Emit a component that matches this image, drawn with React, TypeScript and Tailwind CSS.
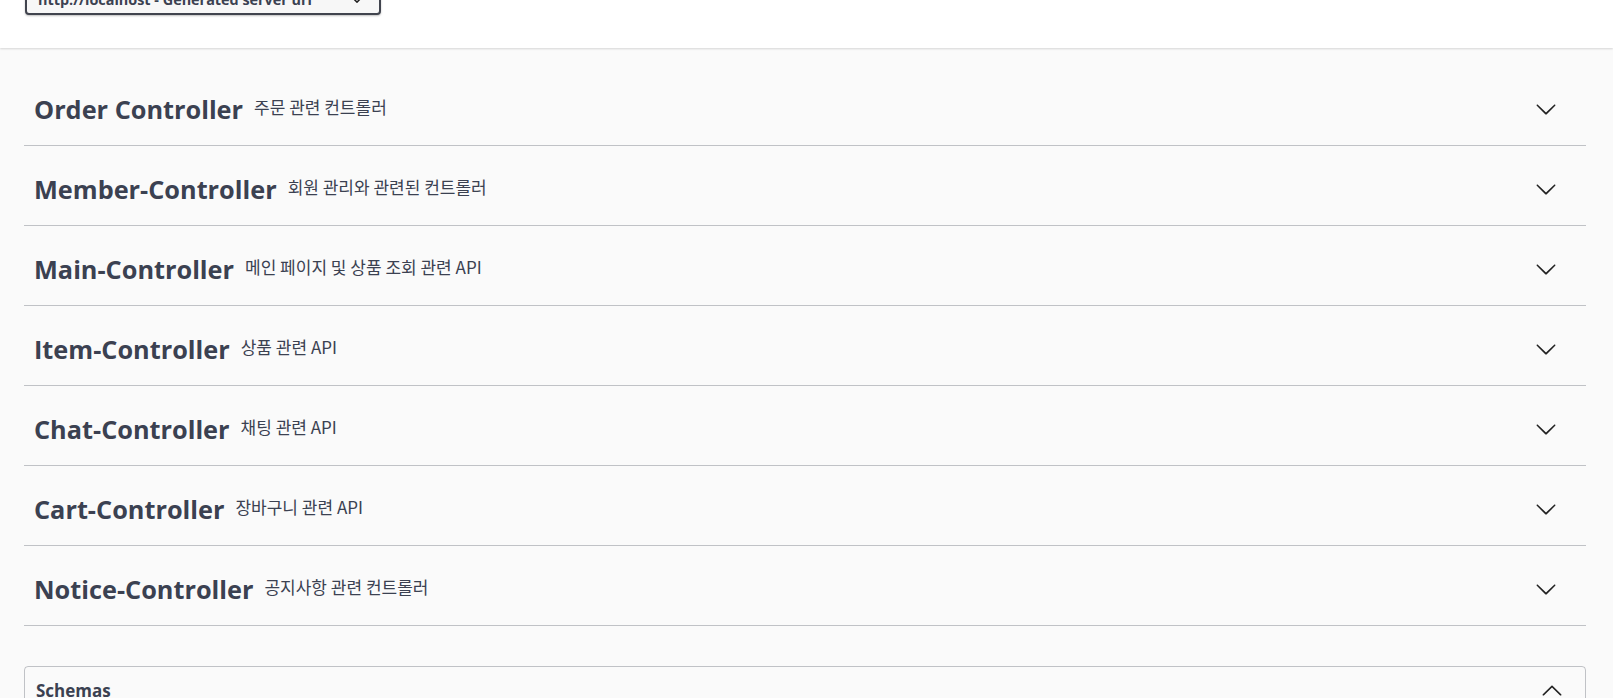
import React from "react";

const rows: { title: string; desc: string }[] = [
  { title: "Order Controller", desc: "주문 관련 컨트롤러" },
  { title: "Member-Controller", desc: "회원 관리와 관련된 컨트롤러" },
  { title: "Main-Controller", desc: "메인 페이지 및 상품 조회 관련 API" },
  { title: "Item-Controller", desc: "상품 관련 API" },
  { title: "Chat-Controller", desc: "채팅 관련 API" },
  { title: "Cart-Controller", desc: "장바구니 관련 API" },
  { title: "Notice-Controller", desc: "공지사항 관련 컨트롤러" },
];

const titleFont = { fontFamily: "'Open Sans', 'Noto Sans CJK KR', sans-serif" };
const descFont = { fontFamily: "'Noto Sans CJK KR', 'Noto Sans', sans-serif" };

function ChevronDown() {
  return (
    <svg width="22" height="22" viewBox="0 0 20 20" className="shrink-0">
      <path
        fill="#222"
        d="M17.418 6.109c.272-.268.709-.268.979 0s.271.701 0 .969l-7.908 7.83c-.27.268-.707.268-.979 0l-7.908-7.83c-.27-.268-.27-.701 0-.969.271-.268.709-.268.979 0L10 13.25l7.418-7.141z"
      />
    </svg>
  );
}

function ChevronUp() {
  return (
    <svg width="22" height="22" viewBox="0 0 20 20" className="shrink-0">
      <path
        fill="#222"
        d="M17.418 14.908c.272.268.709.268.979 0s.271-.701 0-.969l-7.908-7.83c-.27-.268-.707-.268-.979 0l-7.908 7.83c-.27.268-.27.701 0 .969.271.268.709.268.979 0L10 7.767l7.418 7.141z"
      />
    </svg>
  );
}

export default function App() {
  return (
    <div
      className="h-[698px] w-full overflow-hidden bg-[#fafafa] text-[#3b4151]"
      style={titleFont}
    >
      {/* server select header */}
      <div className="-mt-[54px] bg-white pt-[33px] pb-[33px] shadow-[0_1px_2px_0_rgba(0,0,0,0.15)]">
        <div className="ml-[25px] flex h-[36px] w-[356px] items-center justify-between rounded-[4px] border-2 border-[#41444e] bg-[#f7f7f7] pl-[11px] pr-[12px] shadow-[0_1px_2px_0_rgba(0,0,0,0.25)]">
          <span className="mt-[4px] text-[14.4px] font-bold leading-[21px] text-[#3b4151]">
            http://localhost - Generated server url
          </span>
          <svg width="20" height="20" viewBox="0 0 20 20" className="mt-[6px]">
            <path
              fill="#222"
              d="M13.418 7.859a.695.695 0 0 1 .978 0 .68.68 0 0 1 0 .969l-3.908 3.83a.697.697 0 0 1-.979 0l-3.908-3.83a.68.68 0 0 1 0-.969.695.695 0 0 1 .978 0L10 11z"
            />
          </svg>
        </div>
      </div>

      {/* tag rows */}
      <div className="ml-[24px] mr-[27px] mt-[18px]">
        {rows.map((r) => (
          <div
            key={r.title}
            className="flex h-[80px] items-center border-b border-[rgba(59,65,81,0.3)] pl-[10px] pr-[29px] pt-[7px]"
          >
            <span className="text-[25.3px] font-bold leading-[36px] text-[#3b4151]">
              {r.title}
            </span>
            <span
              className="ml-[11px] -mt-[4px] flex-1 text-[17px] font-normal leading-[22px] text-[#3b4151]"
              style={descFont}
            >
              {r.desc}
            </span>
            <ChevronDown />
          </div>
        ))}

        {/* schemas */}
        <div className="mt-[40px] flex h-[80px] items-start justify-between rounded-[4px] border border-[rgba(59,65,81,0.3)] pl-[11px] pr-[22px] pt-[12px]">
          <span className="text-[17px] font-bold leading-[24px] text-[#3b4151]">
            Schemas
          </span>
          <ChevronUp />
        </div>
      </div>
    </div>
  );
}
